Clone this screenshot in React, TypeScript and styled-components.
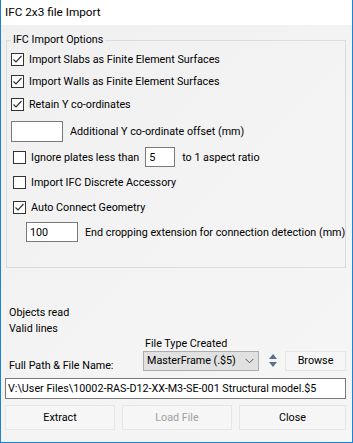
import React from 'react'
import styled, { createGlobalStyle } from 'styled-components'

const GlobalStyle = createGlobalStyle`
  html, body { margin: 0; padding: 0; background: #ffffff; }
  body { font-family: Roboto, "Noto Sans", sans-serif; font-size: 10.75px; color: #000; }
  * { box-sizing: border-box; }
`

const Window = styled.div`
  width: 353px;
  height: 443px;
  border: 1px solid #1883d7;
  border-top: none;
  display: flex;
  flex-direction: column;
  background: linear-gradient(135deg, #f0f0f0 0%, #f6f6f6 100%);
`

const TitleBar = styled.div`
  height: 25px;
  background: #ffffff;
  padding-left: 4px;
  display: flex;
  align-items: center;
  font-size: 11.75px;
  padding-bottom: 1px;
`

const Body = styled.div`
  flex: 1;
  display: flex;
  flex-direction: column;
  padding: 0 6px 0 4px;
`

const Group = styled.fieldset`
  margin: 8px 0 0 1px;
  padding: 1px 4px 24px 4px;
  border: 1px solid #dcdcdc;
  min-width: 0;
`

const Legend = styled.legend`
  padding: 0 2px;
  line-height: 14px;
`

const Row = styled.div<{ $gap?: number; $indent?: number }>`
  height: 22px;
  margin-top: ${({ $gap }) => $gap ?? 0}px;
  padding-left: ${({ $indent }) => $indent ?? 0}px;
  display: flex;
  align-items: center;
  white-space: nowrap;
`

const Box = styled.span`
  width: 13px;
  height: 13px;
  border: 1px solid #333333;
  background: #ffffff;
  display: inline-flex;
  align-items: center;
  justify-content: center;
  margin-right: 5px;
  flex: none;
`

const TextBox = styled.div<{ $w: number; $h?: number; $lead?: number }>`
  width: ${({ $w }) => $w}px;
  height: ${({ $h }) => $h ?? 21}px;
  border: 1px solid #7a7a7a;
  background: #ffffff;
  padding-left: 3px;
  display: flex;
  align-items: center;
  flex: none;
  margin-left: ${({ $lead }) => $lead ?? 0}px;
  margin-right: 7px;
`

const Status = styled.div`
  margin: 37px 0 0 4px;
  display: flex;
  flex-direction: column;
  line-height: 16px;
`

const FileArea = styled.div`
  display: grid;
  grid-template-columns: 138px 116px 26px 61px;
  grid-template-rows: 14px 20px;
  align-items: center;
  margin-top: -1px;
`

const Caption = styled.div`
  grid-column: 2 / span 2;
  grid-row: 1;
  padding-left: 2px;
`

const PathLabel = styled.div`
  grid-column: 1;
  grid-row: 2;
  padding-left: 4px;
  align-self: end;
  margin-bottom: -2px;
`

const Combo = styled.div`
  grid-column: 2;
  grid-row: 2;
  height: 20px;
  margin-top: 1px;
  border: 1px solid #adadad;
  background: #e1e1e1;
  display: flex;
  align-items: center;
  justify-content: space-between;
  padding: 0 4px 0 3px;
`

const Spin = styled.div`
  grid-column: 3;
  grid-row: 2;
  display: flex;
  flex-direction: column;
  align-items: center;
  gap: 3px;
  padding-left: 2px;
`

const FlatButton = styled.div<{ $disabled?: boolean }>`
  height: 25px;
  border: 1px solid #e6e6e6;
  background: #f6f6f6;
  display: flex;
  align-items: center;
  justify-content: center;
  color: ${({ $disabled }) => ($disabled ? '#a0a0a0' : '#000')};
`

const BrowseButton = styled(FlatButton)`
  grid-column: 4;
  grid-row: 2;
  height: 20px;
  margin-top: 1px;
`

const PathBox = styled.div`
  margin-top: 8px;
  height: 21px;
  border: 1px solid #7a7a7a;
  background: #ffffff;
  display: flex;
  align-items: center;
  padding-left: 2px;
  white-space: nowrap;
  overflow: hidden;
`

const ButtonRow = styled.div`
  margin-top: 6px;
  display: grid;
  grid-template-columns: 110px 110px 107px;
  column-gap: 7px;
`

const Check: React.FC<{ checked?: boolean }> = ({ checked }) => (
  <Box>
    {checked && (
      <svg width="11" height="11" viewBox="0 0 11 11">
        <path d="M1.5 5.5 L4 8 L9.5 2" fill="none" stroke="#333" strokeWidth="1.2" />
      </svg>
    )}
  </Box>
)

export default function App() {
  return (
    <Window>
      <GlobalStyle />
      <TitleBar>IFC 2x3 file Import</TitleBar>
      <Body>
        <Group>
          <Legend>IFC Import Options</Legend>
          <Row>
            <Check checked />
            Import Slabs as Finite Element Surfaces
          </Row>
          <Row>
            <Check checked />
            Import Walls as Finite Element Surfaces
          </Row>
          <Row $gap={1}>
            <Check checked />
            Retain Y co-ordinates
          </Row>
          <Row $gap={5}>
            <TextBox $w={52} />
            Additional Y co-ordinate offset (mm)
          </Row>
          <Row $gap={4} $indent={2}>
            <Check />
            Ignore plates less than
            <TextBox $w={30} $h={20} $lead={6}>5</TextBox>
            to 1 aspect ratio
          </Row>
          <Row $gap={3} $indent={2}>
            <Check />
            Import IFC Discrete Accessory
          </Row>
          <Row $gap={3} $indent={2}>
            <Check checked />
            Auto Connect Geometry
          </Row>
          <Row $gap={3} $indent={15}>
            <TextBox $w={52} $h={20}>100</TextBox>
            End cropping extension for connection detection (mm)
          </Row>
        </Group>
        <Status>
          <span>Objects read</span>
          <span>Valid lines</span>
        </Status>
        <FileArea>
          <Caption>File Type Created</Caption>
          <PathLabel>Full Path &amp; File Name:</PathLabel>
          <Combo>
            <span>MasterFrame (.$5)</span>
            <svg width="9" height="6" viewBox="0 0 9 6">
              <path d="M0.5 0.8 L4.5 4.8 L8.5 0.8" fill="none" stroke="#555" strokeWidth="1" />
            </svg>
          </Combo>
          <Spin>
            <svg width="8" height="5" viewBox="0 0 8 5">
              <path d="M0 5 L4 0 L8 5 Z" fill="#56708e" />
            </svg>
            <svg width="8" height="5" viewBox="0 0 8 5">
              <path d="M0 0 L4 5 L8 0 Z" fill="#56708e" />
            </svg>
          </Spin>
          <BrowseButton>Browse</BrowseButton>
        </FileArea>
        <PathBox>V:\User Files\10002-RAS-D12-XX-M3-SE-001 Structural model.$5</PathBox>
        <ButtonRow>
          <FlatButton>Extract</FlatButton>
          <FlatButton $disabled>Load File</FlatButton>
          <FlatButton>Close</FlatButton>
        </ButtonRow>
      </Body>
    </Window>
  )
}
